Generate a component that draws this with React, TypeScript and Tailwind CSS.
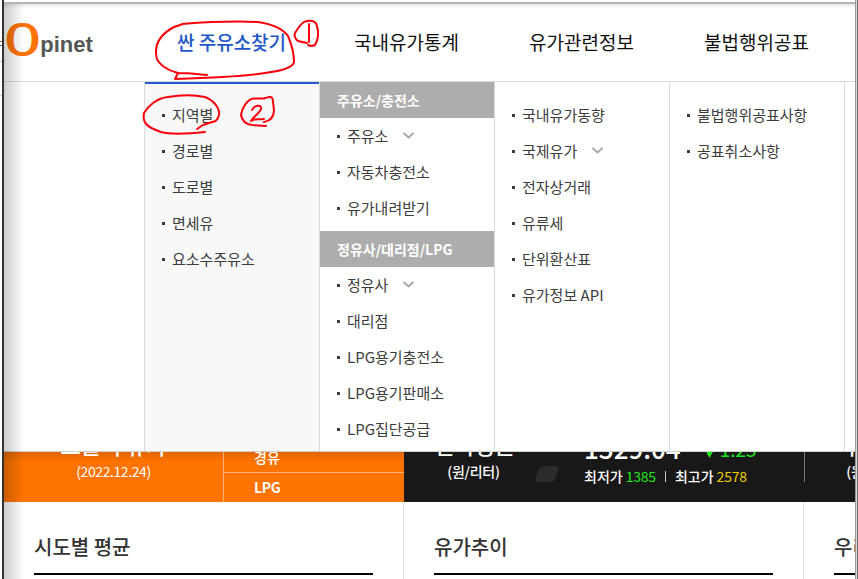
import React from "react";

interface MenuItem {
  label: string;
  more?: boolean;
}

const NAV = ["싼 주유소찾기", "국내유가통계", "유가관련정보", "불법행위공표"];

const FIND_MENU: MenuItem[] = [
  { label: "지역별" },
  { label: "경로별" },
  { label: "도로별" },
  { label: "면세유" },
  { label: "요소수주유소" },
];

const STATION_MENU: MenuItem[] = [
  { label: "주유소", more: true },
  { label: "자동차충전소" },
  { label: "유가내려받기" },
];

const REFINER_MENU: MenuItem[] = [
  { label: "정유사", more: true },
  { label: "대리점" },
  { label: "LPG용기충전소" },
  { label: "LPG용기판매소" },
  { label: "LPG집단공급" },
];

const INFO_MENU: MenuItem[] = [
  { label: "국내유가동향" },
  { label: "국제유가", more: true },
  { label: "전자상거래" },
  { label: "유류세" },
  { label: "단위환산표" },
  { label: "유가정보 API" },
];

const NOTICE_MENU: MenuItem[] = [{ label: "불법행위공표사항" }, { label: "공표취소사항" }];

function MenuList({ items }: { items: MenuItem[] }) {
  return (
    <ul>
      {items.map((item) => (
        <li key={item.label} className="flex h-9 items-center pl-[17px] text-[15px] leading-9 text-[#3c3c3c]">
          <span className="mr-[7px] h-[3px] w-[3px] bg-[#3c3c3c]" />
          <span>{item.label}</span>
          {item.more && (
            <svg className="ml-[14px]" width="13" height="8" viewBox="0 0 13 8" fill="none">
              <path d="M1.5 1L6.5 5.5L11.5 1" stroke="#a8a8a8" strokeWidth="2" />
            </svg>
          )}
        </li>
      ))}
    </ul>
  );
}

function MenuHeading({ children }: { children: React.ReactNode }) {
  return <h3 className="h-9 bg-[#adadad] pl-[17px] text-sm leading-9 font-bold text-white">{children}</h3>;
}

function Header() {
  return (
    <header className="flex h-[78px] shrink-0 border-b border-[#dbdbdb]">
      <div className="flex w-[140px] shrink-0 items-start pl-[2px]">
        <span className="font-['Liberation_Serif'] text-[46px] leading-[71px] text-[#ff7300] [-webkit-text-stroke:2px_#ff7300]">
          O
        </span>
        <span className="ml-[1px] font-['Liberation_Sans'] text-[22px] leading-[81px] font-bold text-[#555]">pinet</span>
      </div>
      <nav className="flex">
        {NAV.map((label, i) => (
          <a
            key={label}
            className={`w-[175px] shrink-0 text-center text-[19px] leading-[75px] ${
              i === 0 ? "font-medium text-[#1f58c7]" : "text-[#111]"
            }`}
          >
            {label}
          </a>
        ))}
      </nav>
    </header>
  );
}

function MegaMenu() {
  return (
    <div className="flex h-[370px] shrink-0 border-b border-[#cfcfcf] pl-[140px]">
      <div className="w-[175px] shrink-0 border-l border-[#dbdbdb] bg-[#f8f8f8]">
        <div className="mb-[13px] h-[2px] bg-[#1f58c7]" />
        <MenuList items={FIND_MENU} />
      </div>
      <div className="w-[175px] shrink-0 border-l border-[#dbdbdb]">
        <MenuHeading>주유소/충전소</MenuHeading>
        <div className="pb-[5px]">
          <MenuList items={STATION_MENU} />
        </div>
        <MenuHeading>정유사/대리점/LPG</MenuHeading>
        <MenuList items={REFINER_MENU} />
      </div>
      <div className="w-[175px] shrink-0 border-l border-[#dbdbdb] pt-[15px]">
        <MenuList items={INFO_MENU} />
      </div>
      <div className="w-[176px] shrink-0 border-x border-[#dbdbdb] pt-[15px]">
        <MenuList items={NOTICE_MENU} />
      </div>
    </div>
  );
}

function PriceBar() {
  return (
    <div className="flex h-[50px] shrink-0 overflow-hidden text-white">
      <div className="flex w-[400px] shrink-0 bg-gradient-to-b from-[#e06500] via-[#ff7300] via-20% to-[#ff7300]">
        <div className="flex w-[219px] flex-col items-center justify-end pb-5">
          <span className="mb-[3px] text-[22px] leading-[26px] font-medium">오늘의 유가</span>
          <span className="text-sm leading-[22px] tracking-[-0.4px]">(2022.12.24)</span>
        </div>
        <div className="flex flex-1 flex-col justify-end border-l border-[#ffb273] text-sm font-bold">
          <div className="h-[30px] shrink-0 border-b border-[#ffb273] pl-[30px] leading-[28px] font-medium">경유</div>
          <div className="h-[29px] shrink-0 pl-[30px] leading-[29px] tracking-[-0.3px]">LPG</div>
        </div>
      </div>
      <div className="flex flex-1 overflow-hidden bg-[#181818]">
        <div className="flex w-[139px] shrink-0 flex-col items-center justify-end pb-5">
          <span className="mb-[3px] ml-[2px] text-[22px] leading-[26px] font-medium">전국평균</span>
          <span className="text-sm leading-[22px] font-medium tracking-[-0.3px]">(원/리터)</span>
        </div>
        <div className="mt-[14px] ml-[-6px] h-4 w-5 shrink-0 -skew-x-[20deg] rounded-sm bg-[#2b2b2b]" />
        <div className="ml-[27px] flex w-[220px] shrink-0 flex-col justify-end pb-[15px]">
          <div className="mb-[4px] flex items-end">
            <span className="text-[26px] leading-[26px] font-medium">1529.04</span>
            <span className="ml-[22px] flex items-center text-[19px] leading-[24px] text-[#1fe81a]">
              <svg className="mt-[6px] mr-[4px]" width="13" height="11" viewBox="0 0 13 11" fill="currentColor">
                <path d="M0.5 0H12.5L6.5 11Z" />
              </svg>
              1.25
            </span>
          </div>
          <div className="flex items-center text-sm leading-[22px]">
            <span className="font-medium">최저가</span>
            <span className="ml-[3px] tracking-[-0.2px] text-[#1fe81a]">1385</span>
            <span className="mx-[9px] h-[11px] w-px bg-[#ccc]" />
            <span className="font-medium">최고가</span>
            <span className="ml-[3px] tracking-[-0.2px] text-[#f0cc00]">2578</span>
          </div>
        </div>
        <div className="h-[30px] w-px shrink-0 bg-[#777]" />
        <div className="flex shrink-0 flex-col items-center justify-end pb-5 pl-[37px]">
          <span className="mb-[3px] text-[22px] leading-[26px] font-medium">두바이</span>
          <span className="text-sm leading-[22px] font-medium tracking-[-0.3px]">(원/리터)</span>
        </div>
      </div>
    </div>
  );
}

function Sections() {
  return (
    <div className="flex flex-1 overflow-hidden text-[20px] text-[#333]">
      {["시도별 평균", "유가추이", "우리동네"].map((title) => (
        <section key={title} className="w-[400px] shrink-0 border-r border-[#e5e5e5] px-[30px] pt-[30px]">
          <h2 className="h-[43px] border-b-2 border-black leading-[30px] font-medium whitespace-nowrap">{title}</h2>
        </section>
      ))}
    </div>
  );
}

// hand-drawn step marks over the menu
function Marks() {
  return (
    <svg
      className="pointer-events-none absolute top-0 left-0"
      width="340"
      height="150"
      fill="none"
      stroke="#fa000a"
      strokeWidth="2"
      strokeLinecap="round"
      strokeLinejoin="round"
    >
      <path d="M182 24C208 22 236 21 258 22C271 24 283 29 288 36C291 43 294 52 294 62C293 68 281 71 265 73C242 77 210 78 175 79L178 73C188 73 196 74 207 75M178 73C166 70 159 64 157 59C153 44 161 34 174 27L183 24" />
      <path d="M168 97C180 95 195 95 205 97C215 101 220 109 219 115C218 119 216 122 212 122L203 125L197 129M168 97C157 98 148 106 144 113C142 122 146 127 161 132C172 135 186 134 205 132" />
      <path d="M307 43L298 41C295 39 294 35 295 33C298 28 301 24 304 22C309 20 316 20 317 26C319 33 318 40 315 45C313 46 310 46 308 45M309 24V42" />
      <path d="M254 98.5C247 99 242 108 241 115C242 121 245 124 252 125L266 126M254 98.5H264C270 96 273 96 273 102L274 110C274 117 270 121 264 122" />
      <path d="M252 110C254 105 262 104 261 109C260 113 254 116 251 121C255 118 258 120 264 119" />
    </svg>
  );
}

export default function App() {
  return (
    <div className="relative flex h-[579px] w-[858px] overflow-hidden bg-white font-['Noto_Sans_CJK_KR',sans-serif]">
      <div className="flex w-1 shrink-0 flex-col border-r-2 border-[#333] bg-white pt-[41px]">
        <div className="h-px bg-[#8a6a6a]" />
        <div className="mt-[3px] h-px bg-[#5865a0]" />
        <div className="mt-[15px] h-px bg-[#ccc]" />
        <div className="mt-[33px] h-px bg-[#ccc]" />
      </div>
      <div className="flex w-[851px] flex-col overflow-hidden">
        <div className="h-1 shrink-0 border-y-2 border-t-white border-b-[#b0b6b3]" />
        <Header />
        <MegaMenu />
        <PriceBar />
        <Sections />
      </div>
      <div className="w-[3px] border-x border-l-[#999] border-r-[#666] bg-[#ddd]" />
      <div className="pointer-events-none absolute top-1 left-1 h-full w-5 bg-gradient-to-r from-black/20 to-transparent" />
      <div className="pointer-events-none absolute top-1 left-1 h-1 w-[851px] bg-gradient-to-b from-black/10 to-transparent" />
      <Marks />
    </div>
  );
}
